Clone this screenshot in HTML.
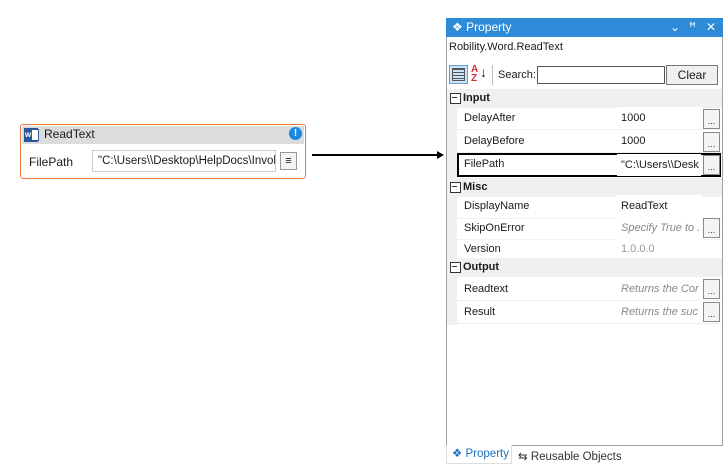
<!DOCTYPE html>
<html><head><meta charset="utf-8"><style>
*{margin:0;padding:0;box-sizing:border-box}
body{width:728px;height:471px;background:#fff;position:relative;overflow:hidden;font-family:"Liberation Sans",sans-serif;font-size:11px;color:#1a1a1a}
.a{position:absolute;white-space:nowrap}
.btn{position:absolute;width:17px;height:20px;border:1px solid #8a8a8a;background:#f4f4f4;font-size:9px;text-align:center;line-height:22px;color:#333}
.lbl{position:absolute;left:464px;font-size:11px}
.val{position:absolute;left:617px;height:22px;line-height:22px;padding-left:4px;font-size:11px;background:#fff;overflow:hidden;white-space:nowrap}
.hdr{position:absolute;left:447px;width:275px;height:19px;background:#f0f0f0;font-weight:bold;line-height:18px;padding-left:16px}
.hdr:before{content:"";position:absolute;left:3px;top:4px;width:9px;height:9px;border:1px solid #333;background:#fff}
.hdr:after{content:"";position:absolute;left:5px;top:8px;width:5px;height:1px;background:#333}
.row{position:absolute;left:457px;width:265px;height:23px;border-bottom:1px solid #f0f0f0}
.it{font-style:italic;color:#888}
</style></head><body>
<div class="a" style="left:20px;top:124px;width:286px;height:55px;border:1.5px solid #f07a3e;border-radius:3px;background:#fff"></div>
<div class="a" style="left:22px;top:126px;width:282px;height:18px;background:#dcdcdc"></div>
<div class="a" style="left:24px;top:128px;width:14px;height:14px;background:#2b5797"></div>
<div class="a" style="left:31px;top:129px;width:8px;height:12px;background:#fff;border:1px solid #2b5797"></div>
<div class="a" style="left:25px;top:130px;color:#fff;font-size:8px;font-weight:bold">w</div>
<div class="a" style="left:44px;top:127px;font-size:12px">ReadText</div>
<div class="a" style="left:289px;top:127px;width:13px;height:13px;border-radius:50%;background:#1a8ae0;color:#fff;font-size:10px;font-weight:bold;text-align:center;line-height:13px">!</div>
<div class="a" style="left:29px;top:155px;font-size:12px">FilePath</div>
<div class="a" style="left:92px;top:150px;width:184px;height:22px;border:1px solid #ccc;padding-left:5px;line-height:20px;overflow:hidden;font-size:11.5px">"C:\Users\\Desktop\HelpDocs\Invol</div>
<div class="a" style="left:280px;top:152px;width:17px;height:18px;border:1px solid #999;background:#f4f4f4;text-align:center;line-height:16px;font-size:11px">≡</div>
<div class="a" style="left:312px;top:154px;width:126px;height:2px;background:#000"></div>
<div class="a" style="left:437px;top:151px;border-left:7px solid #000;border-top:4px solid transparent;border-bottom:4px solid transparent"></div>
<div class="a" style="left:446px;top:18px;width:277px;height:428px;border:1px solid #a0a0a0;background:#fff"></div>
<div class="a" style="left:446px;top:18px;width:277px;height:19px;background:#2e8bd8;color:#fff;font-size:12px;line-height:19px;padding-left:6px">❖ Property<span style="position:absolute;left:224px">⌄</span><span style="position:absolute;left:243px">ꟸ</span><span style="position:absolute;left:260px">✕</span></div>
<div class="a" style="left:449px;top:41px">Robility.Word.ReadText</div>
<div class="a" style="left:449px;top:65px;width:19px;height:19px;border:1px solid #6a9bd1;background:#cde3f7"></div>
<div class="a" style="left:452px;top:68px;width:13px;height:13px;border:1px solid #555;background:repeating-linear-gradient(#555 0 1px,transparent 1px 3px)"></div>
<div class="a" style="left:471px;top:65px;font-size:10px;color:#c33;line-height:9px;font-weight:bold">A<br>Z</div>
<div class="a" style="left:480px;top:64px;font-size:14px">↓</div>
<div class="a" style="left:492px;top:65px;width:1px;height:20px;background:#bbb"></div>
<div class="a" style="left:498px;top:69px">Search:</div>
<div class="a" style="left:537px;top:66px;width:128px;height:18px;border:1px solid #555"></div>
<div class="a" style="left:666px;top:65px;width:52px;height:20px;border:1px solid #777;background:#f0f0f0;text-align:center;line-height:19px;font-size:12px">Clear</div>
<div class="a" style="left:447px;top:89px;width:10px;height:236px;background:#f0f0f0"></div>
<div class="hdr" style="top:89px">Input</div>
<div class="row" style="top:107px"></div><div class="lbl" style="top:112px">DelayAfter</div>
<div class="val" style="top:107px;width:85px">1000</div><div class="btn" style="left:703px;top:109px">...</div>
<div class="row" style="top:130px"></div><div class="lbl" style="top:135px">DelayBefore</div>
<div class="val" style="top:130px;width:85px">1000</div><div class="btn" style="left:703px;top:132px">...</div>
<div class="a" style="left:457px;top:153px;width:264px;height:24px;border:2px solid #000"></div>
<div class="lbl" style="top:158px">FilePath</div>
<div class="val" style="top:154px;width:84px">"C:\Users\\Desk</div><div class="btn" style="left:703px;top:155px">...</div>
<div class="hdr" style="top:178px">Misc</div>
<div class="row" style="top:196px"></div><div class="lbl" style="top:200px">DisplayName</div>
<div class="val" style="top:195px;width:85px">ReadText</div>
<div class="row" style="top:217px"></div><div class="lbl" style="top:222px">SkipOnError</div>
<div class="val it" style="top:217px;width:85px">Specify True to .</div><div class="btn" style="left:703px;top:218px">...</div>
<div class="row" style="top:239px"></div><div class="lbl" style="top:243px">Version</div>
<div class="val" style="top:238px;width:85px;color:#999">1.0.0.0</div>
<div class="hdr" style="top:258px">Output</div>
<div class="row" style="top:278px"></div><div class="lbl" style="top:283px">Readtext</div>
<div class="val it" style="top:278px;width:85px">Returns the Cor</div><div class="btn" style="left:703px;top:279px">...</div>
<div class="row" style="top:301px"></div><div class="lbl" style="top:306px">Result</div>
<div class="val it" style="top:301px;width:85px">Returns the suc</div><div class="btn" style="left:703px;top:302px">...</div>
<div class="a" style="left:446px;top:445px;width:66px;height:19px;background:#fff;border:1px solid #ddd;border-top:none;color:#1c6fc2;line-height:18px;padding-left:5px;font-size:11.5px">❖ Property</div>
<div class="a" style="left:518px;top:449px;color:#333;font-size:11.5px">⇆ Reusable Objects</div>
</body></html>
